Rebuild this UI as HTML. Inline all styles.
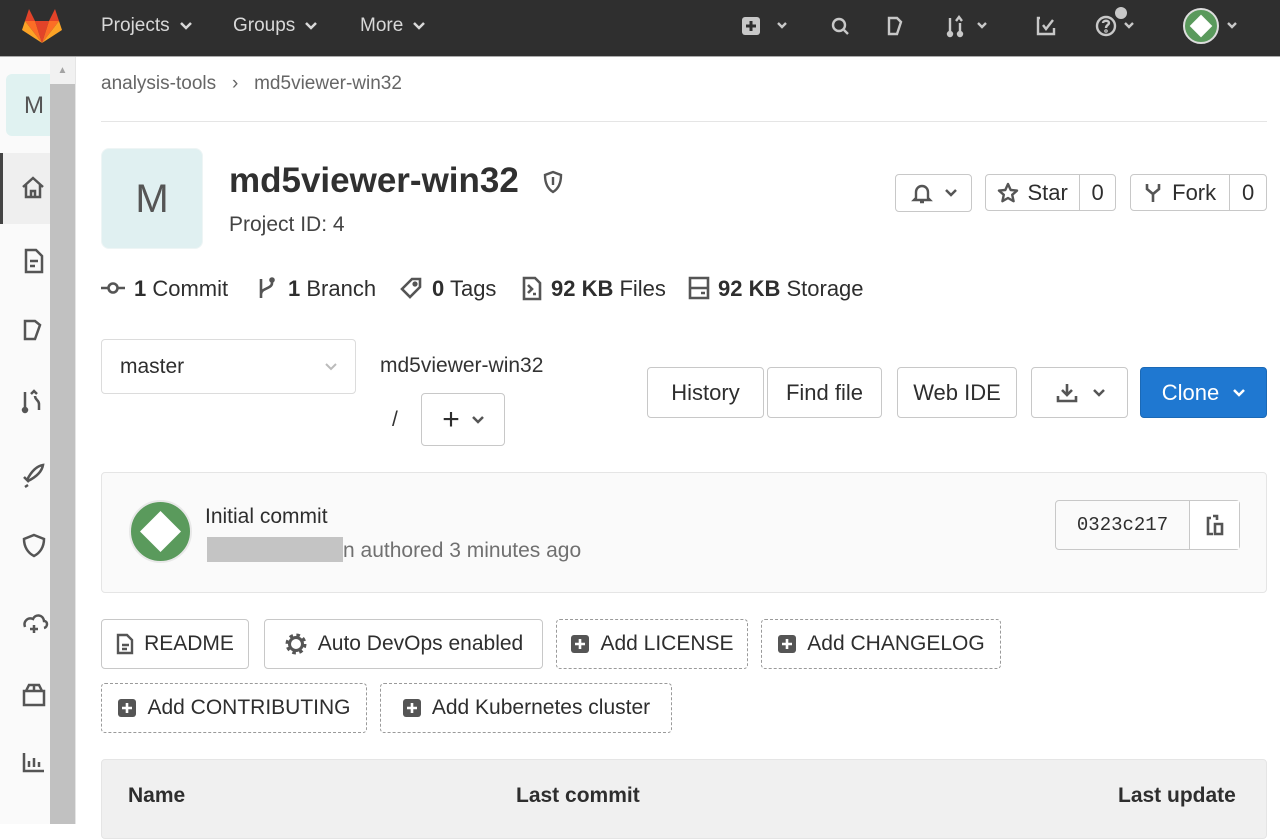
<!DOCTYPE html>
<html><head><meta charset="utf-8">
<style>
*{box-sizing:border-box;margin:0;padding:0}
body{width:1280px;height:824px;overflow:hidden;background:#fff;font-family:"Liberation Sans",sans-serif;color:#2e2e2e;position:relative}
.a{position:absolute}
.hdr{left:0;top:0;width:1280px;height:57px;background:#2f2f2f;border-bottom:1px solid #aaa}
.nav{color:#d8d8d8;font-size:19px;top:15px;display:flex;align-items:center;gap:10px}
.btn{position:absolute;border:1px solid #c8c8c8;border-radius:4px;background:#fff;font-size:22px;color:#2e2e2e;display:flex;align-items:center;justify-content:center}
.q{font-size:21px;gap:10px}
.dash{border:1px dashed #9a9a9a}
.t{position:absolute;white-space:nowrap}
.st{position:absolute;top:276px;font-size:22px;white-space:nowrap}
svg{display:block}
</style></head><body>
<div class="a hdr"></div>
<svg class="a" style="left:22px;top:8px" width="40" height="36" viewBox="0 0 40 36">
<path d="M20 35 L27 13 L13 13Z" fill="#e24329"/><path d="M20 35 L13 13 L3 13Z" fill="#fc6d26"/><path d="M3 13 L0 22 L20 35Z" fill="#fca326"/><path d="M3 13 L7 1 L13 13Z" fill="#e24329"/><path d="M20 35 L27 13 L37 13Z" fill="#fc6d26"/><path d="M37 13 L40 22 L20 35Z" fill="#fca326"/><path d="M37 13 L33 1 L27 13Z" fill="#e24329"/></svg>
<div class="t nav" style="left:101px">Projects <svg width="12" height="8"><path d="M1 1l5 5 5-5" fill="none" stroke="#d8d8d8" stroke-width="2.5"/></svg></div>
<div class="t nav" style="left:233px">Groups <svg width="12" height="8"><path d="M1 1l5 5 5-5" fill="none" stroke="#d8d8d8" stroke-width="2.5"/></svg></div>
<div class="t nav" style="left:360px">More <svg width="12" height="8"><path d="M1 1l5 5 5-5" fill="none" stroke="#d8d8d8" stroke-width="2.5"/></svg></div>
<svg class="a" style="left:740px;top:15px" width="520" height="26" viewBox="0 0 520 26" fill="none" stroke="#c8c8c8" stroke-width="2.4">
<rect x="2" y="2" width="18" height="18" rx="3" fill="#c8c8c8" stroke="none"/><path d="M11 6v10M6 11h10" stroke="#2f2f2f" stroke-width="3"/>
<path d="M38 8l4 4 4-4"/>
<circle cx="99" cy="10" r="6"/><path d="M104 15l4 4"/>
<path d="M149 3h8l4 4-4 12h-8z"/>
<path d="M210 3v16M220 8c0 4 0 6 0 11M216 6l3-4 3 4"/><circle cx="210" cy="19" r="2" fill="#c8c8c8"/><circle cx="220" cy="19" r="2" fill="#c8c8c8"/>
<path d="M238 8l4 4 4-4"/>
<path d="M300 3h-2v16h16v-6M303 10l3 4 7-9"/>
<circle cx="366" cy="11" r="9"/><path d="M363 8c0-3 6-3 6 0 0 2-3 2-3 5"/><circle cx="366" cy="16" r="0.6"/>
<path d="M385 8l4 4 4-4"/>
<path d="M488 8l4 4 4-4"/></svg>
<div class="a" style="left:1115px;top:7px;width:12px;height:12px;border-radius:6px;background:#c8c8c8"></div>
<div class="a" style="left:1183px;top:8px;width:36px;height:36px;border-radius:18px;background:#5a9a5c;border:2px solid #ddd"><div style="margin:8px;width:16px;height:16px;background:#fff;transform:rotate(45deg)"></div></div>

<div class="a" style="left:0;top:57px;width:50px;height:767px;background:#fafafa"></div>
<div class="a" style="left:50px;top:57px;width:25px;height:767px;background:#c1c1c1"></div>
<div class="a" style="left:50px;top:57px;width:25px;height:27px;background:#f1f1f1;color:#a3a3a3;font-size:10px;text-align:center;line-height:27px">▲</div>
<div class="a" style="left:75px;top:57px;width:1px;height:767px;background:#e5e5e5"></div>
<div class="a" style="left:6px;top:74px;width:44px;height:62px;background:#e0f2f1;border-radius:6px 0 0 6px;font-size:24px;color:#555;padding:18px 0 0 18px">M</div>
<div class="a" style="left:0;top:153px;width:50px;height:71px;background:#efefef;border-left:3px solid #444"></div>
<svg class="a" style="left:20px;top:175px" width="30" height="600" viewBox="0 0 30 600" fill="none" stroke="#555" stroke-width="2.5">
<path d="M3 12L13 3l10 9M6 10v12h14V10M11 22v-6h4v6"/>
<path d="M6 75h10l6 6v16H6zM10 86h8M10 91h5"/>
<path d="M5 146h10l5 4-5 14H5z"/>
<path d="M5 217v18M15 221c0 4 4 4 4 8v6M11 219l3-3 3 3"/><circle cx="5" cy="235" r="2" fill="#555"/>
<path d="M7 305c5-10 10-14 16-15-1 6-5 11-15 16M4 302l5 5M8 310l-3 2"/>
<path d="M14 360l10 4c0 8-4 14-10 17-6-3-10-9-10-17z"/>
<path d="M5 452c-2-6 3-10 8-8 2-5 10-5 11 2 4 0 4 6 0 7M14 450v8M10 454h8"/>
<path d="M4 516h20v14H4zM6 516l3-6h10l3 6M14 510v6"/>
<path d="M4 578v18h20M9 592v-6M14 592v-9M19 592v-5"/>
</svg>

<div class="t" style="left:101px;top:73px;font-size:19px;color:#666">analysis-tools &nbsp;&nbsp;›&nbsp;&nbsp; md5viewer-win32</div>
<div class="a" style="left:101px;top:121px;width:1166px;height:1px;background:#e5e5e5"></div>

<div class="a" style="left:101px;top:148px;width:102px;height:101px;background:#e0f0f1;border-radius:8px;border:1px solid #eef5f5;font-size:40px;color:#555;text-align:center;line-height:100px">M</div>
<div class="t" style="left:229px;top:161px;font-size:35px;font-weight:bold;color:#303030">md5viewer-win32</div>
<svg class="a" style="left:542px;top:170px" width="22" height="24" viewBox="0 0 22 24" fill="none" stroke="#555" stroke-width="2.4"><path d="M11 2l8 3c0 9-3 14-8 17C6 19 3 14 3 5z"/><path d="M11 7v8"/></svg>
<div class="t" style="left:229px;top:213px;font-size:21px;color:#444">Project ID: 4</div>

<div class="btn" style="left:895px;top:174px;width:77px;height:38px"><svg width="22" height="22" viewBox="0 0 22 22" fill="none" stroke="#555" stroke-width="2.4"><path d="M5 16V10a6 6 0 0 1 12 0v6l2 2H3zM9 20h4"/></svg><svg style="margin-left:12px" width="12" height="8"><path d="M1 1l5 5 5-5" fill="none" stroke="#555" stroke-width="2.5"/></svg></div>
<div class="btn" style="left:985px;top:174px;width:131px;height:37px;justify-content:flex-start"><span style="width:95px;border-right:1px solid #c8c8c8;height:35px;display:flex;align-items:center;justify-content:center;gap:8px"><svg width="22" height="22" viewBox="0 0 22 22" fill="none" stroke="#555" stroke-width="2.4" stroke-linejoin="round"><path d="M11 2l2.7 6 6.3.6-4.8 4.2 1.4 6.4L11 16l-5.6 3.2 1.4-6.4L2 8.6 8.3 8z"/></svg>Star</span><span style="width:35px;text-align:center">0</span></div>
<div class="btn" style="left:1130px;top:174px;width:137px;height:37px;justify-content:flex-start"><span style="width:100px;border-right:1px solid #c8c8c8;height:35px;display:flex;align-items:center;justify-content:center;gap:10px"><svg width="18" height="22" viewBox="0 0 18 22" fill="none" stroke="#555" stroke-width="2.6"><path d="M3 2v5l6 5 6-5V2M9 12v8"/></svg>Fork</span><span style="width:36px;text-align:center">0</span></div>

<svg class="a" style="left:101px;top:276px" width="780" height="26" viewBox="0 0 780 26" fill="none" stroke="#555" stroke-width="2.6">
<path d="M0 12h7M17 12h7"/><circle cx="12" cy="12" r="4.5"/>
<path d="M160 3v19M160 18c0-6 11-5 11-11V3"/><circle cx="171" cy="4" r="1.5" fill="#555"/>
<path d="M301 13l10-10h8v8l-10 10z"/><circle cx="314" cy="8" r="1.3" fill="#555"/>
<path d="M423 2h11l5 5v16h-16zM427 9l4 4-4 4M432 18h3"/>
<path d="M589 2h18v20h-18zM589 12h18M600 17h4"/>
</svg>
<div class="st" style="left:134px"><b>1</b> Commit</div>
<div class="st" style="left:288px"><b>1</b> Branch</div>
<div class="st" style="left:432px"><b>0</b> Tags</div>
<div class="st" style="left:551px"><b>92 KB</b> Files</div>
<div class="st" style="left:718px"><b>92 KB</b> Storage</div>

<div class="btn" style="left:101px;top:339px;width:255px;height:55px;justify-content:space-between;padding:0 18px;border-color:#dcdcdc;font-size:21px">master<svg width="12" height="8"><path d="M1 1l5 5 5-5" fill="none" stroke="#bbb" stroke-width="2"/></svg></div>
<div class="t" style="left:380px;top:354px;font-size:21px;color:#333">md5viewer-win32</div>
<div class="t" style="left:392px;top:408px;font-size:21px;color:#333">/</div>
<div class="btn" style="left:421px;top:393px;width:84px;height:53px;font-size:30px">+<svg style="margin-left:12px" width="12" height="8"><path d="M1 1l5 5 5-5" fill="none" stroke="#555" stroke-width="2.5"/></svg></div>

<div class="btn" style="left:647px;top:367px;width:117px;height:51px">History</div>
<div class="btn" style="left:767px;top:367px;width:115px;height:51px">Find file</div>
<div class="btn" style="left:897px;top:367px;width:120px;height:51px">Web IDE</div>
<div class="btn" style="left:1031px;top:367px;width:97px;height:51px"><svg width="24" height="22" viewBox="0 0 24 22" fill="none" stroke="#555" stroke-width="2.6"><path d="M12 2v11M7 8l5 5 5-5M3 14v5h18v-5"/></svg><svg style="margin-left:14px" width="12" height="8"><path d="M1 1l5 5 5-5" fill="none" stroke="#555" stroke-width="2.5"/></svg></div>
<div class="btn" style="left:1140px;top:367px;width:127px;height:51px;background:#1f78d1;border-color:#1b69b6;color:#fff">Clone<svg style="margin-left:14px" width="12" height="8"><path d="M1 1l5 5 5-5" fill="none" stroke="#fff" stroke-width="2.5"/></svg></div>

<div class="a" style="left:101px;top:472px;width:1166px;height:121px;background:#fafafa;border:1px solid #e5e5e5;border-radius:4px"></div>
<div class="a" style="left:129px;top:500px;width:63px;height:63px;border-radius:32px;background:#5a9a5c;border:2px solid #e8e8e8"><div style="margin:15px;width:29px;height:29px;background:#fff;transform:rotate(45deg)"></div></div>
<div class="t" style="left:205px;top:505px;font-size:21px;color:#2e2e2e">Initial commit</div>
<div class="a" style="left:207px;top:537px;width:136px;height:25px;background:#c4c4c4"></div>
<div class="t" style="left:343px;top:539px;font-size:21px;color:#707070">n authored 3 minutes ago</div>
<div class="btn" style="left:1055px;top:500px;width:185px;height:50px;justify-content:flex-start;background:#fafafa"><span style="width:134px;text-align:center;font-family:'Liberation Mono',monospace;font-size:19px;border-right:1px solid #c8c8c8;line-height:48px">0323c217</span><span style="flex:1;background:#fff;height:48px;display:flex;align-items:center;justify-content:center"><svg width="20" height="24" viewBox="0 0 20 24" fill="none" stroke="#555" stroke-width="2.6"><path d="M6 5H3v16h5M8 3h4v4M10 11h7v10h-7z"/></svg></span></div>

<div class="btn q" style="left:101px;top:619px;width:148px;height:50px"><svg width="18" height="22" viewBox="0 0 18 22" fill="none" stroke="#555" stroke-width="2.4"><path d="M2 2h9l5 5v13H2zM6 12h7M6 16h5"/></svg>README</div>
<div class="btn q" style="left:264px;top:619px;width:279px;height:50px"><svg width="24" height="24" viewBox="0 0 24 24"><circle cx="12" cy="12" r="8" fill="none" stroke="#555" stroke-width="5" stroke-dasharray="3.2 3.1"/><circle cx="12" cy="12" r="6.5" fill="none" stroke="#555" stroke-width="3"/></svg>Auto DevOps enabled</div>
<div class="btn q dash" style="left:556px;top:619px;width:192px;height:50px"><svg width="20" height="20" viewBox="0 0 20 20"><rect x="1" y="1" width="18" height="18" rx="3" fill="#555"/><path d="M10 5v10M5 10h10" stroke="#fff" stroke-width="2.6"/></svg>Add LICENSE</div>
<div class="btn q dash" style="left:761px;top:619px;width:240px;height:50px"><svg width="20" height="20" viewBox="0 0 20 20"><rect x="1" y="1" width="18" height="18" rx="3" fill="#555"/><path d="M10 5v10M5 10h10" stroke="#fff" stroke-width="2.6"/></svg>Add CHANGELOG</div>
<div class="btn q dash" style="left:101px;top:683px;width:266px;height:50px"><svg width="20" height="20" viewBox="0 0 20 20"><rect x="1" y="1" width="18" height="18" rx="3" fill="#555"/><path d="M10 5v10M5 10h10" stroke="#fff" stroke-width="2.6"/></svg>Add CONTRIBUTING</div>
<div class="btn q dash" style="left:380px;top:683px;width:292px;height:50px"><svg width="20" height="20" viewBox="0 0 20 20"><rect x="1" y="1" width="18" height="18" rx="3" fill="#555"/><path d="M10 5v10M5 10h10" stroke="#fff" stroke-width="2.6"/></svg>Add Kubernetes cluster</div>

<div class="a" style="left:101px;top:759px;width:1166px;height:80px;background:#f0f0f0;border:1px solid #e5e5e5;border-radius:4px"></div>
<div class="t" style="left:128px;top:784px;font-size:21px;font-weight:bold">Name</div>
<div class="t" style="left:516px;top:784px;font-size:21px;font-weight:bold">Last commit</div>
<div class="t" style="left:1118px;top:784px;font-size:21px;font-weight:bold">Last update</div>
</body></html>
